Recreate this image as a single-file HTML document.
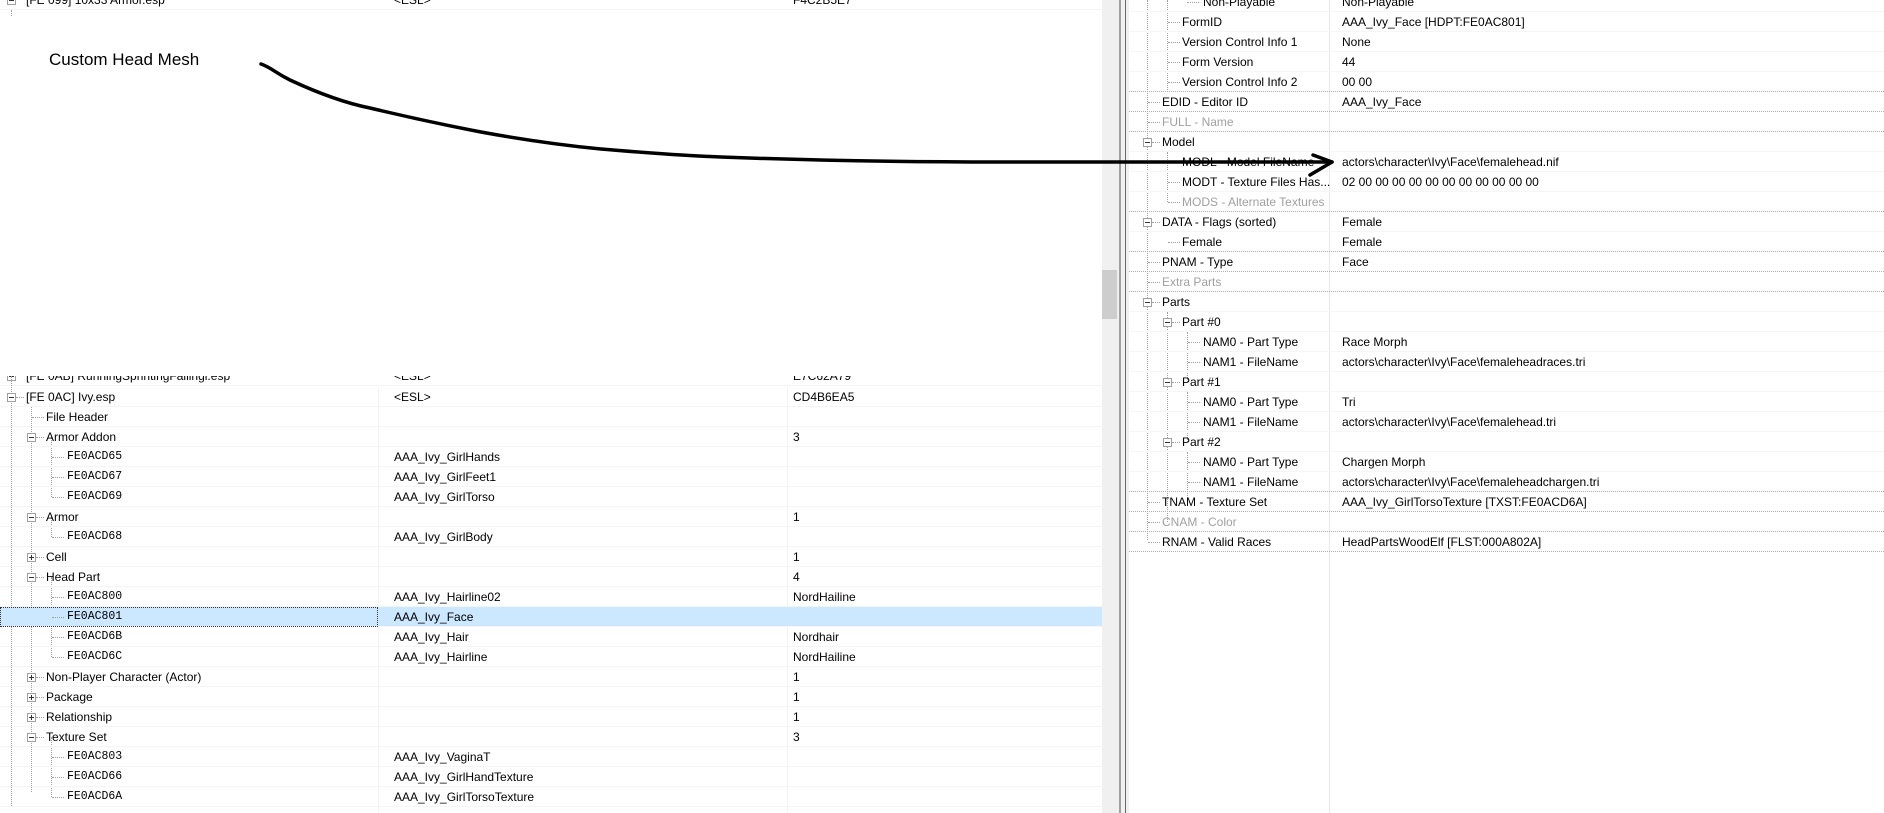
<!DOCTYPE html>
<html><head><meta charset="utf-8"><style>
*{margin:0;padding:0;box-sizing:border-box}
body{width:1884px;height:813px;overflow:hidden;background:#fff;font-family:"Liberation Sans",sans-serif;font-size:12px;color:#000;position:relative}
.a{position:absolute;white-space:nowrap}
.row{position:absolute;left:0;width:1102px;height:20px;border-bottom:1px solid #f5f5f5}
.t{position:absolute;top:3px;white-space:nowrap;line-height:14px}
.m{font-family:"Liberation Mono",monospace;font-size:11.5px}
.ex{position:absolute;top:6px;width:9px;height:9px;border:1px solid #a0a0a0;background:#fff}
.ex::before{content:"";position:absolute;left:1px;top:3px;width:5px;height:1px;background:#333}
.ex.p::after{content:"";position:absolute;left:3px;top:1px;width:1px;height:5px;background:#333}
.h{position:absolute;top:10px;height:0;border-top:1px dotted #a0a0a0}
.v{position:absolute;width:0;border-left:1px dotted #a0a0a0}
.rr{position:absolute;left:1129px;width:755px;height:20px;border-bottom:1px solid #f6f6f6}
.rr.d{border-bottom:1px dotted #b0b0b0}
.g{color:#a0a0a0}
</style></head><body>

<div class="row" style="top:-10px">
<div class="ex" style="left:7px"></div><div class="t" style="left:26px">[FE 099] 10x33 Armor.esp</div><div class="t" style="left:394px">&lt;ESL&gt;</div><div class="t" style="left:793px">F4C2B5E7</div></div>
<div class="v" style="left:11px;top:10px;height:6px"></div>

<div class="a" style="left:49px;top:50px;font-size:17px">Custom Head Mesh</div>

<div class="a" style="left:0;top:376px;width:1102px;height:11px;overflow:hidden">
<div class="row" style="top:-10px"><div class="ex" style="left:7px"></div><div class="t" style="left:26px">[FE 0AB] RunningSprintingFallingl.esp</div><div class="t" style="left:394px">&lt;ESL&gt;</div><div class="t" style="left:793px">E7C62A79</div></div></div>

<div class="v" style="left:11px;top:376px;height:430px"></div>
<div class="v" style="left:31px;top:407px;height:385px"></div>
<div class="v" style="left:51px;top:437px;height:60px"></div>
<div class="v" style="left:51px;top:517px;height:20px"></div>
<div class="v" style="left:51px;top:577px;height:80px"></div>
<div class="v" style="left:51px;top:737px;height:60px"></div>
<div class="a" style="left:378px;top:387px;width:1px;height:426px;background:#f3f3f3"></div>
<div class="a" style="left:787px;top:387px;width:1px;height:426px;background:#f3f3f3"></div>

<div class="row" style="top:387px"><div class="ex" style="left:7px"></div><div class="h" style="left:16px;width:8px"></div><div class="t" style="left:26px">[FE 0AC] Ivy.esp</div><div class="t" style="left:394px">&lt;ESL&gt;</div><div class="t" style="left:793px">CD4B6EA5</div></div>
<div class="row" style="top:407px"><div class="h" style="left:32px;width:12px"></div><div class="t" style="left:46px">File Header</div></div>
<div class="row" style="top:427px"><div class="ex" style="left:27px"></div><div class="h" style="left:36px;width:8px"></div><div class="t" style="left:46px">Armor Addon</div><div class="t" style="left:793px">3</div></div>
<div class="row" style="top:447px"><div class="h" style="left:52px;width:12px"></div><div class="t m" style="left:67px">FE0ACD65</div><div class="t" style="left:394px">AAA_Ivy_GirlHands</div></div>
<div class="row" style="top:467px"><div class="h" style="left:52px;width:12px"></div><div class="t m" style="left:67px">FE0ACD67</div><div class="t" style="left:394px">AAA_Ivy_GirlFeet1</div></div>
<div class="row" style="top:487px"><div class="h" style="left:52px;width:12px"></div><div class="t m" style="left:67px">FE0ACD69</div><div class="t" style="left:394px">AAA_Ivy_GirlTorso</div></div>
<div class="row" style="top:507px"><div class="ex" style="left:27px"></div><div class="h" style="left:36px;width:8px"></div><div class="t" style="left:46px">Armor</div><div class="t" style="left:793px">1</div></div>
<div class="row" style="top:527px"><div class="h" style="left:52px;width:12px"></div><div class="t m" style="left:67px">FE0ACD68</div><div class="t" style="left:394px">AAA_Ivy_GirlBody</div></div>
<div class="row" style="top:547px"><div class="ex p" style="left:27px"></div><div class="h" style="left:36px;width:8px"></div><div class="t" style="left:46px">Cell</div><div class="t" style="left:793px">1</div></div>
<div class="row" style="top:567px"><div class="ex" style="left:27px"></div><div class="h" style="left:36px;width:8px"></div><div class="t" style="left:46px">Head Part</div><div class="t" style="left:793px">4</div></div>
<div class="row" style="top:587px"><div class="h" style="left:52px;width:12px"></div><div class="t m" style="left:67px">FE0AC800</div><div class="t" style="left:394px">AAA_Ivy_Hairline02</div><div class="t" style="left:793px">NordHailine</div></div>
<div class="row" style="top:607px;background:#cce8ff"><div class="a" style="left:0;top:0;width:378px;height:20px;border:1px dotted #333"></div><div class="h" style="left:52px;width:12px"></div><div class="t m" style="left:67px">FE0AC801</div><div class="t" style="left:394px">AAA_Ivy_Face</div></div>
<div class="row" style="top:627px"><div class="h" style="left:52px;width:12px"></div><div class="t m" style="left:67px">FE0ACD6B</div><div class="t" style="left:394px">AAA_Ivy_Hair</div><div class="t" style="left:793px">Nordhair</div></div>
<div class="row" style="top:647px"><div class="h" style="left:52px;width:12px"></div><div class="t m" style="left:67px">FE0ACD6C</div><div class="t" style="left:394px">AAA_Ivy_Hairline</div><div class="t" style="left:793px">NordHailine</div></div>
<div class="row" style="top:667px"><div class="ex p" style="left:27px"></div><div class="h" style="left:36px;width:8px"></div><div class="t" style="left:46px">Non-Player Character (Actor)</div><div class="t" style="left:793px">1</div></div>
<div class="row" style="top:687px"><div class="ex p" style="left:27px"></div><div class="h" style="left:36px;width:8px"></div><div class="t" style="left:46px">Package</div><div class="t" style="left:793px">1</div></div>
<div class="row" style="top:707px"><div class="ex p" style="left:27px"></div><div class="h" style="left:36px;width:8px"></div><div class="t" style="left:46px">Relationship</div><div class="t" style="left:793px">1</div></div>
<div class="row" style="top:727px"><div class="ex" style="left:27px"></div><div class="h" style="left:36px;width:8px"></div><div class="t" style="left:46px">Texture Set</div><div class="t" style="left:793px">3</div></div>
<div class="row" style="top:747px"><div class="h" style="left:52px;width:12px"></div><div class="t m" style="left:67px">FE0AC803</div><div class="t" style="left:394px">AAA_Ivy_VaginaT</div></div>
<div class="row" style="top:767px"><div class="h" style="left:52px;width:12px"></div><div class="t m" style="left:67px">FE0ACD66</div><div class="t" style="left:394px">AAA_Ivy_GirlHandTexture</div></div>
<div class="row" style="top:787px"><div class="h" style="left:52px;width:12px"></div><div class="t m" style="left:67px">FE0ACD6A</div><div class="t" style="left:394px">AAA_Ivy_GirlTorsoTexture</div></div>

<div class="a" style="left:1102px;top:0;width:15px;height:813px;background:#f0f0f0"></div>
<div class="a" style="left:1102px;top:270px;width:15px;height:49px;background:#cdcdcd"></div>
<div class="a" style="left:1117px;top:0;width:12px;height:813px;background:#f0f0f0"></div>
<div class="a" style="left:1119px;top:0;width:2px;height:813px;background:#a0a0a0"></div>
<div class="a" style="left:1125px;top:0;width:1px;height:813px;background:#696969"></div>

<div class="a" style="left:1329px;top:0;width:1px;height:813px;background:#e8e8e8"></div>
<div class="v" style="left:1147px;top:0;height:540px"></div>
<div class="v" style="left:1167px;top:0;height:90px"></div>
<div class="v" style="left:1167px;top:152px;height:50px"></div>
<div class="v" style="left:1167px;top:312px;height:210px"></div>
<div class="v" style="left:1187px;top:332px;height:50px"></div>
<div class="v" style="left:1187px;top:392px;height:50px"></div>
<div class="v" style="left:1187px;top:452px;height:50px"></div>

<div class="rr" style="top:-8px"><div class="h" style="left:58px;width:12px"></div><div class="t" style="left:74px">Non-Playable</div><div class="t" style="left:213px">Non-Playable</div></div>
<div class="rr" style="top:12px"><div class="h" style="left:39px;width:12px"></div><div class="t" style="left:53px">FormID</div><div class="t" style="left:213px">AAA_Ivy_Face [HDPT:FE0AC801]</div></div>
<div class="rr" style="top:32px"><div class="h" style="left:39px;width:12px"></div><div class="t" style="left:53px">Version Control Info 1</div><div class="t" style="left:213px">None</div></div>
<div class="rr" style="top:52px"><div class="h" style="left:39px;width:12px"></div><div class="t" style="left:53px">Form Version</div><div class="t" style="left:213px">44</div></div>
<div class="rr d" style="top:72px"><div class="h" style="left:39px;width:12px"></div><div class="t" style="left:53px">Version Control Info 2</div><div class="t" style="left:213px">00 00</div></div>
<div class="rr d" style="top:92px"><div class="h" style="left:19px;width:12px"></div><div class="t" style="left:33px">EDID - Editor ID</div><div class="t" style="left:213px">AAA_Ivy_Face</div></div>
<div class="rr d" style="top:112px"><div class="h" style="left:19px;width:12px"></div><div class="t g" style="left:33px">FULL - Name</div></div>
<div class="rr" style="top:132px"><div class="ex" style="left:14px"></div><div class="h" style="left:23px;width:8px"></div><div class="t" style="left:33px">Model</div></div>
<div class="rr" style="top:152px"><div class="h" style="left:39px;width:12px"></div><div class="t" style="left:53px">MODL - Model FileName</div><div class="t" style="left:213px">actors\character\Ivy\Face\femalehead.nif</div></div>
<div class="rr" style="top:172px"><div class="h" style="left:39px;width:12px"></div><div class="t" style="left:53px">MODT - Texture Files Has...</div><div class="t" style="left:213px">02 00 00 00 00 00 00 00 00 00 00 00</div></div>
<div class="rr d" style="top:192px"><div class="h" style="left:39px;width:12px"></div><div class="t g" style="left:53px">MODS - Alternate Textures</div></div>
<div class="rr" style="top:212px"><div class="ex" style="left:14px"></div><div class="h" style="left:23px;width:8px"></div><div class="t" style="left:33px">DATA - Flags (sorted)</div><div class="t" style="left:213px">Female</div></div>
<div class="rr d" style="top:232px"><div class="h" style="left:39px;width:12px"></div><div class="t" style="left:53px">Female</div><div class="t" style="left:213px">Female</div></div>
<div class="rr d" style="top:252px"><div class="h" style="left:19px;width:12px"></div><div class="t" style="left:33px">PNAM - Type</div><div class="t" style="left:213px">Face</div></div>
<div class="rr d" style="top:272px"><div class="h" style="left:19px;width:12px"></div><div class="t g" style="left:33px">Extra Parts</div></div>
<div class="rr" style="top:292px"><div class="ex" style="left:14px"></div><div class="h" style="left:23px;width:8px"></div><div class="t" style="left:33px">Parts</div></div>
<div class="rr" style="top:312px"><div class="ex" style="left:34px"></div><div class="h" style="left:43px;width:8px"></div><div class="t" style="left:53px">Part #0</div></div>
<div class="rr" style="top:332px"><div class="h" style="left:59px;width:12px"></div><div class="t" style="left:74px">NAM0 - Part Type</div><div class="t" style="left:213px">Race Morph</div></div>
<div class="rr" style="top:352px"><div class="h" style="left:59px;width:12px"></div><div class="t" style="left:74px">NAM1 - FileName</div><div class="t" style="left:213px">actors\character\Ivy\Face\femaleheadraces.tri</div></div>
<div class="rr" style="top:372px"><div class="ex" style="left:34px"></div><div class="h" style="left:43px;width:8px"></div><div class="t" style="left:53px">Part #1</div></div>
<div class="rr" style="top:392px"><div class="h" style="left:59px;width:12px"></div><div class="t" style="left:74px">NAM0 - Part Type</div><div class="t" style="left:213px">Tri</div></div>
<div class="rr" style="top:412px"><div class="h" style="left:59px;width:12px"></div><div class="t" style="left:74px">NAM1 - FileName</div><div class="t" style="left:213px">actors\character\Ivy\Face\femalehead.tri</div></div>
<div class="rr" style="top:432px"><div class="ex" style="left:34px"></div><div class="h" style="left:43px;width:8px"></div><div class="t" style="left:53px">Part #2</div></div>
<div class="rr" style="top:452px"><div class="h" style="left:59px;width:12px"></div><div class="t" style="left:74px">NAM0 - Part Type</div><div class="t" style="left:213px">Chargen Morph</div></div>
<div class="rr d" style="top:472px"><div class="h" style="left:59px;width:12px"></div><div class="t" style="left:74px">NAM1 - FileName</div><div class="t" style="left:213px">actors\character\Ivy\Face\femaleheadchargen.tri</div></div>
<div class="rr d" style="top:492px"><div class="h" style="left:19px;width:12px"></div><div class="t" style="left:33px">TNAM - Texture Set</div><div class="t" style="left:213px">AAA_Ivy_GirlTorsoTexture [TXST:FE0ACD6A]</div></div>
<div class="rr d" style="top:512px"><div class="h" style="left:19px;width:12px"></div><div class="t g" style="left:33px">CNAM - Color</div></div>
<div class="rr d" style="top:532px"><div class="h" style="left:19px;width:12px"></div><div class="t" style="left:33px">RNAM - Valid Races</div><div class="t" style="left:213px">HeadPartsWoodElf [FLST:000A802A]</div></div>

<svg class="a" style="left:0;top:0" width="1884" height="813">
<path d="M261,64 C272,68 274,72 290,80 C320,94 345,103 370,108 C420,120 450,126 481,132 C530,141 570,146 601,149 C660,154 690,156 721,157 C800,160 900,162 1000,162 C1100,163 1200,163 1332,162" fill="none" stroke="#000" stroke-width="3.5" stroke-linecap="round"/>
<path d="M1313,155 L1332,162 L1310,175" fill="none" stroke="#000" stroke-width="3.5" stroke-linecap="round" stroke-linejoin="round"/>
</svg>
</body></html>
